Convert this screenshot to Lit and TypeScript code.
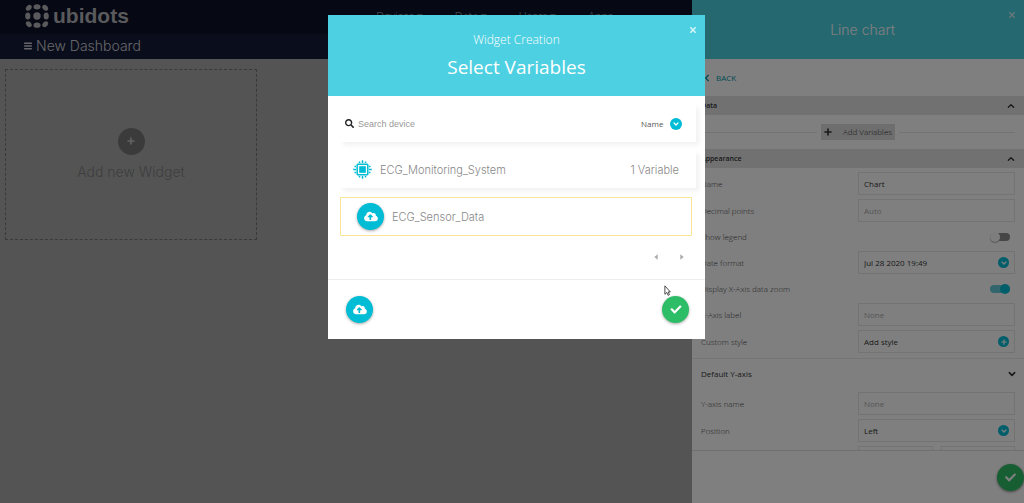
import { LitElement, html, css, svg, nothing } from "lit";
import { customElement, property } from "lit/decorators.js";

const paths: Record<string, unknown> = {
  cloud: svg`<path fill="currentColor" d="M537.6 226.6c4.100-10.700 6.400-22.400 6.400-34.600 0-53-43-96-96-96-19.700 0-38.100 6-53.300 16.200C367 64.200 315.300 32 256 32c-88.400 0-160 71.600-160 160 0 2.700.1 5.400.2 8.100C40.200 219.800 0 273.200 0 336c0 79.500 64.500 144 144 144h368c70.700 0 128-57.300 128-128 0-61.900-44-113.600-102.400-125.400zM393.400 288H328v112c0 8.800-7.200 16-16 16h-48c-8.800 0-16-7.200-16-16V288h-65.400c-14.300 0-21.400-17.200-11.300-27.300l105.400-105.400c6.200-6.200 16.400-6.200 22.600 0l105.400 105.400c10.100 10.100 2.900 27.300-11.300 27.300z"/>`,
  check: svg`<path fill="currentColor" d="M173.900 439.400l-166.400-166.400c-10-10-10-26.200 0-36.200l36.200-36.200c10-10 26.200-10 36.200 0L192 312.700 432.100 72.600c10-10 26.200-10 36.200 0l36.200 36.200c10 10 10 26.200 0 36.200l-294.400 294.400c-10 10-26.200 10-36.200 0z"/>`,
  search: svg`<path fill="currentColor" d="M505 442.700L405.300 343c-4.500-4.500-10.600-7-17-7H372c27.600-35.300 44-79.700 44-128C416 93.100 322.900 0 208 0S0 93.100 0 208s93.100 208 208 208c48.300 0 92.700-16.400 128-44v16.300c0 6.400 2.500 12.500 7 17l99.700 99.700c9.400 9.400 24.600 9.400 33.900 0l28.300-28.300c9.400-9.400 9.400-24.600.1-34zM208 336c-70.700 0-128-57.200-128-128 0-70.700 57.200-128 128-128 70.700 0 128 57.200 128 128 0 70.700-57.200 128-128 128z"/>`,
  chip: svg`<g fill="none" stroke="currentColor" stroke-width="1.500"><rect x="4.200" y="4.200" width="10.600" height="10.600" rx=".8"/><path d="M6.500 3V1.500M9.500 3V.2M12.500 3V1.500M6.500 16v1.500M9.500 16v2.800M12.500 16v1.500M3 6.500H1.500M3 9.500H.2M3 12.500H1.500M16 6.500h1.500M16 9.500h2.800M16 12.500h1.500"/></g><rect x="6.200" y="6.200" width="6.600" height="6.600" fill="currentColor"/>`,
  down: svg`<path fill="none" stroke="currentColor" stroke-width="2.400" stroke-linecap="round" stroke-linejoin="round" d="M2 4l4 4 4-4"/>`,
  up: svg`<path fill="none" stroke="currentColor" stroke-width="2" stroke-linecap="round" stroke-linejoin="round" d="M2 8l4-4 4 4"/>`,
  left: svg`<path fill="none" stroke="currentColor" stroke-width="2" stroke-linecap="round" stroke-linejoin="round" d="M8 2L4 6l4 4"/>`,
  plus: svg`<path fill="none" stroke="currentColor" stroke-width="2.400" stroke-linecap="round" d="M6 1.500v9M1.500 6h9"/>`,
  close: svg`<path fill="none" stroke="currentColor" stroke-width="2.200" d="M2 2l8 8M10 2l-8 8"/>`,
  menu: svg`<path fill="none" stroke="currentColor" stroke-width="2.200" stroke-linecap="round" d="M1 2h10M1 6h10M1 10h10"/>`,
  prev: svg`<path fill="currentColor" d="M8.500 2v8L3.500 6z"/>`,
  next: svg`<path fill="currentColor" d="M3.500 2v8l5-4z"/>`,
  logo: svg`<g fill="currentColor"><circle cx="12" cy="12" r="3.700"/><ellipse cx="12" cy="2.800" rx="3.500" ry="2.600"/><ellipse cx="12" cy="21.200" rx="3.500" ry="2.600"/><ellipse cx="2.800" cy="12" rx="2.600" ry="3.500"/><ellipse cx="21.200" cy="12" rx="2.600" ry="3.500"/><ellipse cx="3.800" cy="3.800" rx="3.300" ry="2.400" transform="rotate(-45 3.800 3.800)"/><ellipse cx="20.200" cy="3.800" rx="3.300" ry="2.400" transform="rotate(45 20.200 3.800)"/><ellipse cx="3.800" cy="20.200" rx="3.300" ry="2.400" transform="rotate(45 3.800 20.200)"/><ellipse cx="20.200" cy="20.200" rx="3.300" ry="2.400" transform="rotate(-45 20.200 20.200)"/></g>`,
  cursor: svg`<path fill="#fff" stroke="#333" stroke-width="1" stroke-linejoin="round" d="M1 .7v9.600l2.200-2 1.500 3.200 1.500-.7-1.500-3.100h2.600z"/>`,
};
const boxes: Record<string, string> = {
  cloud: "0 0 640 512", check: "0 0 512 512", search: "0 0 512 512",
  chip: "0 0 19 19", logo: "0 0 24 24", cursor: "0 0 8 12",
};

@customElement("ui-icon")
class UiIcon extends LitElement {
  @property() name = "plus";
  static styles = css`
    :host { display: block; width: 8px; height: 8px; flex: none; }
    svg { display: block; width: 100%; height: 100%; overflow: visible; }
  `;
  render() {
    return html`<svg viewBox=${boxes[this.name] ?? "0 0 12 12"} aria-hidden="true">${paths[this.name]}</svg>`;
  }
}

interface Field {
  id: string;
  label: string;
  kind: "text" | "select" | "toggle" | "button";
  value?: string;
  placeholder?: string;
  on?: boolean;
}

const appearance: Field[] = [
  { id: "name", label: "Name", kind: "text", value: "Chart" },
  { id: "decimals", label: "Decimal points", kind: "text", placeholder: "Auto" },
  { id: "legend", label: "Show legend", kind: "toggle", on: false },
  { id: "date", label: "Date format", kind: "select", value: "Jul 28 2020 19:49" },
  { id: "zoom", label: "Display X-Axis data zoom", kind: "toggle", on: true },
  { id: "xlabel", label: "X-Axis label", kind: "text", placeholder: "None" },
  { id: "style", label: "Custom style", kind: "button", value: "Add style" },
];
const yAxis: Field[] = [
  { id: "yname", label: "Y-axis name", kind: "text", placeholder: "None" },
  { id: "position", label: "Position", kind: "select", value: "Left" },
];

const controls = css`
  * { box-sizing: border-box; }
  button, input, select { font: inherit; color: inherit; margin: 0; padding: 0; border: 0; background: none; border-radius: 0; outline: 0; }
  select { appearance: none; }
  button { display: flex; align-items: center; justify-content: center; }
  h1, h2, h3, p { margin: 0; font-weight: inherit; font-size: inherit; }
  a { color: inherit; text-decoration: none; }
`;

@customElement("settings-panel")
class SettingsPanel extends LitElement {
  static styles = [controls, css`
    :host { display: flex; flex-direction: column; height: 100%; background: #fff; color: #333; font: 8px/12px "Open Sans", sans-serif; overflow: hidden; }
    .head { position: relative; flex: none; height: 59px; display: grid; place-items: center; background: #4dd0e1; color: #fff; font: 300 14px/20px Inter, sans-serif; padding-left: 9px; }
    .close { position: absolute; top: 11px; right: 8px; color: #c8f0f5; }
    .back { flex: none; display: flex; align-items: center; gap: 5px; padding: 0 11px; height: 37px; color: #0097a7; }
    .scroll { flex: 1; min-height: 0; overflow: hidden; }
    .bar { display: flex; align-items: center; justify-content: space-between; height: 19px; padding: 0 9px; background: #e2e2e2; font-size: 7px; font-weight: 600; }
    .bar button { width: 8px; height: 8px; }
    .add { display: flex; align-items: center; gap: 4px; height: 34px; padding: 0 9px; }
    .add::before, .add::after { content: ""; flex: 1; border-top: 1px solid #e6e6e6; }
    .add button { width: 74px; height: 16px; gap: 11px; background: #dcdcdc; color: #333; font-weight: 300; }
    .fields { display: flex; flex-direction: column; gap: 4px; padding: 4px 9px 5px; }
    .row { display: flex; align-items: center; justify-content: space-between; color: #444; font-weight: 300; min-height: 21px; }
    .control { position: relative; display: flex; align-items: center; width: 157px; height: 23px; border: 1px solid #e6e6e6; color: #333; font-weight: 400; }
    .control input, .control select, .control button { width: 100%; height: 100%; padding: 0 5px; justify-content: flex-start; }
    input::placeholder { color: #aaa; opacity: 1; }
    .dot { position: absolute; right: 5px; width: 11px; height: 11px; border-radius: 50%; background: #00bcd4; color: #fff; display: grid; place-items: center; pointer-events: none; }
    .dot ui-icon { width: 6px; height: 6px; }
    .toggle { appearance: none; position: relative; width: 20px; height: 8px; border-radius: 4px; margin-right: 5px; background: linear-gradient(to right, transparent 8px, #8c8c8c 8px); }
    .toggle::before { content: ""; position: absolute; left: 0; top: -1px; width: 10px; height: 10px; border-radius: 50%; background: #fafafa; box-shadow: 0 1px 1px #aaa; }
    .toggle:checked { background: #66ccd9; }
    .toggle:checked::before { left: 10px; background: #00bcd4; box-shadow: none; }
    .sub { display: flex; align-items: center; justify-content: space-between; height: 30px; padding: 0 8px 0 9px; border-top: 1px solid #eaeaea; }
    .cut { display: flex; gap: 8px; margin-left: auto; width: 157px; }
    .cut .control { flex: 1; width: auto; }
    .foot { flex: none; height: 53px; border-top: 1px solid #e0e0e0; display: flex; justify-content: flex-end; align-items: center; padding-top: 1px; }
    .fab { width: 27px; height: 27px; border-radius: 50%; background: #2ebd67; color: #fff; box-shadow: 0 1px 3px #888; }
    .fab ui-icon { width: 11px; height: 11px; }
  `];

  control(f: Field) {
    if (f.kind === "toggle") return html`<input class="toggle" id=${f.id} type="checkbox" ?checked=${f.on} />`;
    const body = f.kind === "text"
      ? html`<input id=${f.id} type="text" .value=${f.value ?? ""} placeholder=${f.placeholder ?? nothing} />`
      : f.kind === "select"
        ? html`<select id=${f.id}><option>${f.value}</option></select><span class="dot"><ui-icon name="down"></ui-icon></span>`
        : html`<button id=${f.id} type="button">${f.value}</button><span class="dot"><ui-icon name="plus"></ui-icon></span>`;
    return html`<div class="control">${body}</div>`;
  }

  rows(fields: Field[]) {
    return fields.map(f => html`
      <div class="row"><label for=${f.id}>${f.label}</label>${this.control(f)}</div>`);
  }

  render() {
    return html`
      <header class="head"><h2>Line chart</h2><button class="close" aria-label="Close panel"><ui-icon name="close"></ui-icon></button></header>
      <a class="back" href="#"><ui-icon name="left"></ui-icon>BACK</a>
      <div class="scroll">
        <div class="bar"><h3>Data</h3><button aria-label="Collapse data"><ui-icon name="up"></ui-icon></button></div>
        <div class="add"><button><ui-icon name="plus"></ui-icon>Add Variables</button></div>
        <div class="bar"><h3>Appearance</h3><button aria-label="Collapse appearance"><ui-icon name="up"></ui-icon></button></div>
        <div class="fields">${this.rows(appearance)}</div>
        <div class="sub"><h3>Default Y-axis</h3><button aria-label="Expand axis"><ui-icon name="down"></ui-icon></button></div>
        <div class="fields">
          ${this.rows(yAxis)}
          <div class="cut">
            <div class="control"><input type="text" aria-label="Minimum" /></div>
            <div class="control"><input type="text" aria-label="Maximum" /></div>
          </div>
        </div>
      </div>
      <footer class="foot"><button class="fab" aria-label="Save widget"><ui-icon name="check"></ui-icon></button></footer>`;
  }
}

@customElement("variable-dialog")
class VariableDialog extends LitElement {
  static styles = [controls, css`
    :host { display: block; width: 377px; max-width: 100%; background: #fff; font: 8px/12px "Open Sans", sans-serif; color: #777; position: relative; }
    .head { position: relative; display: flex; flex-direction: column; align-items: center; gap: 6px; height: 81px; padding-top: 17px; background: #4dd0e1; color: #fff; }
    .head p { font: 300 12px/16px "Open Sans", sans-serif; }
    .head h1 { font: 400 19px/26px "Open Sans", sans-serif; }
    .close { position: absolute; top: 11px; right: 8px; color: #d8f6fa; }
    .body { padding: 9px 9px 0 12px; }
    .card { display: flex; align-items: center; background: #fff; box-shadow: 3px 3px 5px rgba(0, 0, 0, 0.06); }
    .search { height: 37px; padding: 0 14px 0 5px; gap: 4px; }
    .search > ui-icon { width: 9px; height: 9px; color: #222; }
    .search input { flex: 1; min-width: 0; font: 9px/12px "Liberation Sans", sans-serif; color: #333; }
    .search input::placeholder { color: #999; opacity: 1; }
    .sort { position: relative; display: flex; align-items: center; color: #555; }
    .sort select { width: 41px; height: 14px; }
    .dot { position: absolute; right: 0; width: 12px; height: 12px; border-radius: 50%; background: #00bcd4; color: #fff; display: grid; place-items: center; pointer-events: none; }
    .dot ui-icon { width: 6px; height: 6px; }
    .item { width: 100%; font: 300 11px/16px Inter, sans-serif; color: #888; }
    .device { height: 37px; margin-top: 9px; padding: 0 17px 0 13px; gap: 8px; justify-content: flex-start; background: #fff; }
    .device ui-icon { width: 19px; height: 19px; color: #00bcd4; }
    .device .count { margin-left: auto; }
    .variable { width: calc(100% - 4px); height: 39px; margin-top: 9px; padding: 0 16px; gap: 8px; justify-content: flex-start; border: 1px solid #fbe59a; border-radius: 1px; }
    .round { width: 27px; height: 27px; border-radius: 50%; display: grid; place-items: center; color: #fff; background: #00bcd4; box-shadow: 0 1px 3px rgba(0, 0, 0, 0.35); }
    .round.ok { background: #2ebd67; }
    .round ui-icon { width: 14px; height: 11px; }
    .pager { display: flex; justify-content: flex-end; gap: 18px; padding: 17px 10px 18px 0; color: #aaa; }
    .foot { display: flex; align-items: center; justify-content: space-between; height: 60px; padding: 0 16px 0 18px; border-top: 1px solid #eee; }
    .cursor { position: absolute; left: 336px; top: 270px; width: 7px; height: 11px; }
  `];

  render() {
    return html`
      <header class="head"><p>Widget Creation</p><h1>Select Variables</h1>
        <button class="close" aria-label="Close dialog"><ui-icon name="close"></ui-icon></button></header>
      <div class="body">
        <div class="card search">
          <ui-icon name="search"></ui-icon>
          <input type="search" placeholder="Search device" aria-label="Search device" />
          <div class="sort"><select aria-label="Sort by"><option>Name</option></select><span class="dot"><ui-icon name="down"></ui-icon></span></div>
        </div>
        <button class="card item device"><ui-icon name="chip"></ui-icon><span>ECG_Monitoring_System</span><span class="count">1 Variable</span></button>
        <button class="item variable"><span class="round"><ui-icon name="cloud"></ui-icon></span><span>ECG_Sensor_Data</span></button>
        <nav class="pager"><button aria-label="Previous"><ui-icon name="prev"></ui-icon></button><button aria-label="Next"><ui-icon name="next"></ui-icon></button></nav>
      </div>
      <footer class="foot">
        <button class="round" aria-label="Upload"><ui-icon name="cloud"></ui-icon></button>
        <button class="round ok" aria-label="Confirm"><ui-icon name="check"></ui-icon></button>
      </footer>
      <ui-icon class="cursor" name="cursor"></ui-icon>`;
  }
}

@customElement("app-root")
class AppRoot extends LitElement {
  static styles = [controls, css`
    :host { display: grid; grid-template-columns: minmax(0, 1fr) 332px; height: 100vh; position: relative; overflow: hidden; background: #a9a9a9; font: 300 14px/20px Inter, sans-serif; }
    .top { display: flex; align-items: center; height: 34px; padding: 0 79px 3px 25px; background: #0c1228; color: #b4b4b8; }
    .logo { display: flex; align-items: center; gap: 4px; font: 700 21px/24px "Liberation Sans", sans-serif; }
    .logo ui-icon { width: 24px; height: 24px; }
    .nav { display: flex; gap: 32px; margin-left: auto; font: 300 11px/14px "Open Sans", sans-serif; }
    .title { display: flex; align-items: center; gap: 4px; height: 25px; padding: 0 24px 2px; background: #141a38; color: #cfcfd2; }
    .shade { position: absolute; inset: 0; display: flex; justify-content: center; align-items: flex-start; padding: 15px 0 0 9px; background: rgba(0, 0, 0, 0.5); }
    .tile { display: flex; flex-direction: column; align-items: center; justify-content: center; gap: 7px; width: 252px; height: 171px; margin: 10px 5px; border: 1px dashed #747474; color: #7c7c7c; }
    .plus { display: grid; place-items: center; width: 27px; height: 27px; border-radius: 50%; background: #777; color: #c4c4c4; }
  `];

  render() {
    return html`
      <main>
        <header class="top">
          <a class="logo" href="#"><ui-icon name="logo"></ui-icon>ubidots</a>
          <nav class="nav">
            <a href="#">Devices ▾</a><a href="#">Data ▾</a><a href="#">Users ▾</a><a href="#">Apps</a>
          </nav>
        </header>
        <div class="title"><ui-icon name="menu"></ui-icon><h2>New Dashboard</h2></div>
        <button class="tile"><span class="plus"><ui-icon name="plus"></ui-icon></span>Add new Widget</button>
      </main>
      <settings-panel></settings-panel>
      <div class="shade"><variable-dialog role="dialog" aria-label="Select Variables"></variable-dialog></div>`;
  }
}
